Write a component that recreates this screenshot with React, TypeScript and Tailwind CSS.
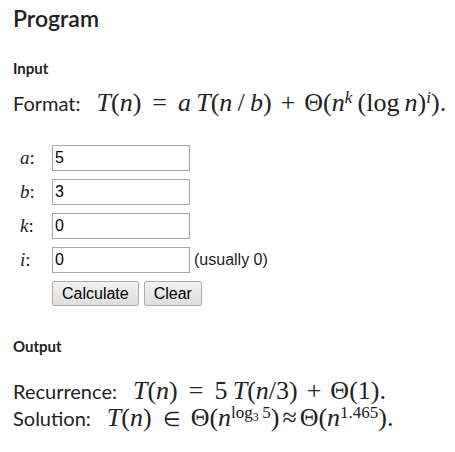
const sans = { fontFamily: 'Lato, "Open Sans", sans-serif' };

function M({ children }: { children: React.ReactNode }) {
  return <span className="font-['Liberation_Serif',serif] text-[26px] leading-[26px] text-[#222]">{children}</span>;
}

const I = ({ children }: { children: React.ReactNode }) => <i>{children}</i>;
const Rel = ({ children }: { children: React.ReactNode }) => <span className="inline-block mx-[11px]">{children}</span>;
const Bin = ({ children }: { children: React.ReactNode }) => <span className="inline-block mx-[9px]">{children}</span>;

const rows = [
  { label: 'a', value: '5' },
  { label: 'b', value: '3' },
  { label: 'k', value: '0' },
  { label: 'i', value: '0', note: '(usually 0)' },
];

export default function App() {
  return (
    <div className="w-[455px] h-[452px] bg-white px-[13px] text-[#222] font-['Lato',sans-serif]" style={sans}>
      <h1 className="pt-[4px] text-[23px] font-semibold leading-[28px]">Program</h1>

      <h2 className="mt-[26px] text-[15px] font-bold leading-[20px]">Input</h2>
      <p className="mt-[12px] text-[20px] leading-[26px] whitespace-nowrap">
        Format:
        <span className="ml-[16px]">
          <M>
            <I>T</I>(<I>n</I>)<Rel>=</Rel><I>a</I>&thinsp;<I>T</I>(<I>n</I>&thinsp;/&thinsp;<I>b</I>)<Bin>+</Bin>Θ(<I>n</I>
            <sup className="text-[17px]"><I>k</I></sup>&thinsp;(log&thinsp;<I>n</I>)<sup className="text-[17px]"><I>i</I></sup>).
          </M>
        </span>
      </p>

      <div className="mt-[29px] flex flex-col gap-[8px] font-['Liberation_Sans',Arial,sans-serif] text-[16px]">
        {rows.map((r) => (
          <div key={r.label} className="flex items-center h-[26px]">
            <span className="w-[39px] pl-[7px] font-['Liberation_Serif',serif] text-[19px] text-[#222]">
              <i>{r.label}</i>:
            </span>
            <input
              readOnly
              value={r.value}
              className="w-[138px] h-[26px] border border-[#a9a9a9] px-[2px] text-[16px] text-black outline-none"
            />
            {r.note && <span className="ml-[4px] text-[#222]">{r.note}</span>}
          </div>
        ))}
        <div className="flex gap-[5px] pl-[39px]">
          <button className="h-[25px] px-[9px] border border-[#adadad] rounded-[2px] bg-gradient-to-b from-[#f2f2f2] to-[#dedede] text-black leading-none">
            Calculate
          </button>
          <button className="h-[25px] px-[9px] border border-[#adadad] rounded-[2px] bg-gradient-to-b from-[#f2f2f2] to-[#dedede] text-black leading-none">
            Clear
          </button>
        </div>
      </div>

      <h2 className="mt-[30px] text-[15px] font-bold leading-[20px]">Output</h2>
      <p className="mt-[22px] text-[20px] leading-[26px] whitespace-nowrap">
        Recurrence:
        <span className="ml-[16px]">
          <M>
            <I>T</I>(<I>n</I>)<Rel>=</Rel>5&thinsp;<I>T</I>(<I>n</I>/3)<Bin>+</Bin>Θ(1).
          </M>
        </span>
      </p>
      <p className="mt-[1px] text-[20px] leading-[26px] whitespace-nowrap">
        Solution:
        <span className="ml-[16px]">
          <M>
            <I>T</I>(<I>n</I>)<Rel><span className="text-[20px]">∈</span></Rel>Θ(<I>n</I>
            <sup className="text-[17px]">
              log<sub className="text-[12px]">3</sub>&thinsp;5
            </sup>
            )<span className="inline-block mx-[3px]">≈</span>Θ(<I>n</I>
            <sup className="text-[17px]">1.465</sup>).
          </M>
        </span>
      </p>
    </div>
  );
}
